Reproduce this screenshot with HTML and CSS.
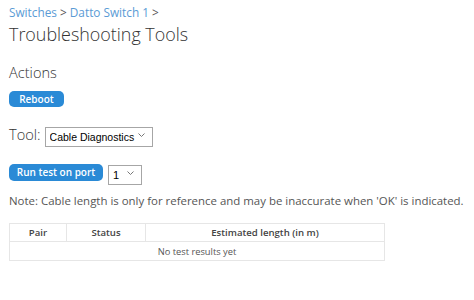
FILE: index.html
```html
<!DOCTYPE html>
<html>
<head>
<meta charset="utf-8">
<link rel="stylesheet" href="styles.css">
</head>
<body>
<div class="page">
  <div class="crumbs"><a href="#">Switches</a> &gt; <a href="#">Datto Switch 1</a> &gt;</div>
  <h1 class="title">Troubleshooting Tools</h1>
  <h2 class="section">Actions</h2>
  <div class="row-reboot"><button class="btn btn-reboot">Reboot</button></div>
  <div class="row-tool">
    <label class="tool-label">Tool:</label>
    <span class="sel-wrap sel-tool">
      <select class="sel"><option>Cable Diagnostics</option></select>
      <svg class="chev" width="7" height="4" viewBox="0 0 7 4"><path d="M0.5 0.5 L3.5 3.5 L6.5 0.5" fill="none" stroke="#777" stroke-width="1"/></svg>
    </span>
  </div>
  <div class="row-run">
    <button class="btn btn-run">Run test on port</button>
    <span class="sel-wrap sel-port">
      <select class="sel sel-num"><option>1</option></select>
      <svg class="chev" width="7" height="4" viewBox="0 0 7 4"><path d="M0.5 0.5 L3.5 3.5 L6.5 0.5" fill="none" stroke="#777" stroke-width="1"/></svg>
    </span>
  </div>
  <p class="note">Note: Cable length is only for reference and may be inaccurate when 'OK' is indicated.</p>
  <table class="results">
    <thead>
      <tr><th class="c-pair">Pair</th><th class="c-status">Status</th><th>Estimated length (in m)</th></tr>
    </thead>
    <tbody>
      <tr><td colspan="3">No test results yet</td></tr>
    </tbody>
  </table>
</div>
</body>
</html>
```
FILE: styles.css
```css
* { box-sizing: border-box; }
html, body { margin: 0; padding: 0; background: #fff; }
body { font-family: "Open Sans", "DejaVu Sans", sans-serif; color: #555; }
.page { padding: 4px 9px; }
.crumbs { font-size: 11.8px; line-height: 16px; color: #555; }
.crumbs a { color: #5a9bd5; text-decoration: none; }
.title { margin: 2px 0 0; font-size: 17.9px; line-height: 24px; font-weight: 300; color: #333; }
.section { margin: 17px 0 0; font-size: 14.6px; line-height: 18px; font-weight: 300; color: #333; }
.row-reboot { margin-top: 10px; display: flex; }
.btn {
  font-family: "Open Sans", sans-serif; font-size: 10px; font-weight: 600; color: #fff;
  background: #2a8ad6; border: 0; border-radius: 5px; height: 16px; line-height: 16px; padding: 0;
}
.btn-reboot { width: 55px; }
.btn-run { width: 94px; height: 17px; }
.row-tool { margin-top: 17px; display: flex; align-items: center; gap: 4px; }
.tool-label { font-size: 14.6px; line-height: 20px; font-weight: 300; color: #333; }
.sel-wrap { position: relative; display: block; height: 20px; }
.sel {
  -webkit-appearance: none; appearance: none;
  font-family: "Liberation Sans", Arial, sans-serif; font-size: 10.5px; color: #000;
  border: 1px solid #a6a6a6; background: #fff; height: 20px; width: 100%; border-radius: 0; padding: 0 0 0 4px; margin: 0;
}
.sel-num { font-size: 11px; }
.chev { position: absolute; right: 8px; top: 9px; }
.sel-tool { width: 108px; }
.sel-port { width: 34px; }
.row-run { margin-top: 18px; display: flex; align-items: center; gap: 5px; }
.note { margin: 11px 0 0; font-size: 11.45px; line-height: 16px; color: #555; white-space: nowrap; }
.results { margin-top: 14px; width: 376px; border-collapse: collapse; font-size: 9.3px; color: #555; }
.results th, .results td { border: 1px solid #e6e6e6; height: 18px; padding: 0; text-align: center; }
.results td { height: 19px; }
.results th { font-size: 9.6px; font-weight: 600; color: #444; }
.c-pair { width: 57px; }
.c-status { width: 79px; }
```
